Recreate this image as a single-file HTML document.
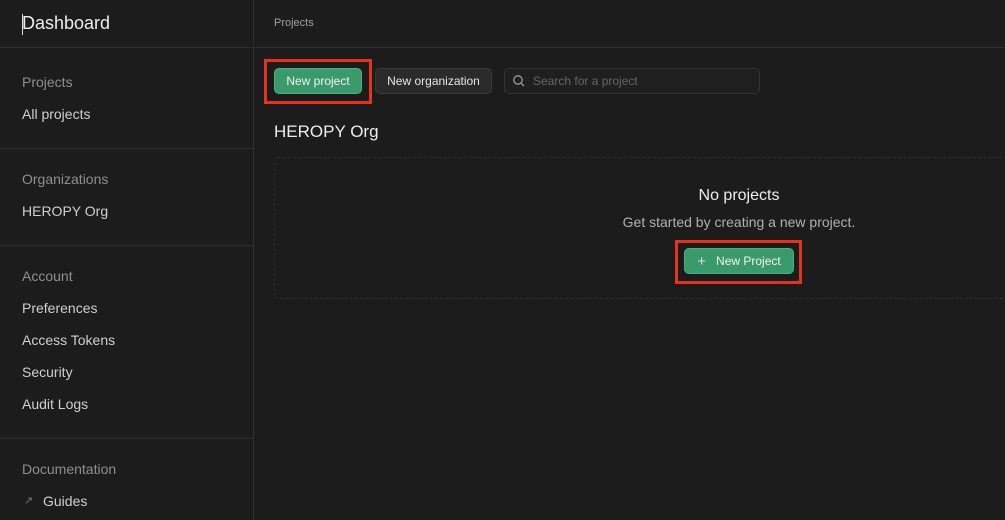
<!DOCTYPE html>
<html><head><style>
*{margin:0;padding:0;box-sizing:border-box}
body{width:1005px;height:520px;background:#1c1c1c;font-family:"Liberation Sans",sans-serif;position:relative;overflow:hidden;color:#ededed}
.a{position:absolute;white-space:nowrap}
.hl{position:absolute;height:1px;background:#2e2e2e}
.sec{color:#8f8f8f;font-size:14px}
.it{color:#cfcfcf;font-size:14px}
.btn{position:absolute;border-radius:5px;font-size:12px;display:flex;align-items:center;justify-content:center}
.red{position:absolute;border:3px solid #e8321e}
</style></head><body>
<div class="a" style="left:253px;top:0;width:1px;height:520px;background:#2e2e2e"></div>
<div class="hl" style="left:0;top:47px;width:1005px"></div>
<div class="a" style="left:22px;top:13px;font-size:18px;color:#ededed">Dashboard</div>
<div class="a" style="left:22px;top:14px;width:1px;height:21px;background:#ddd"></div>
<div class="a" style="left:274px;top:17px;font-size:11px;color:#a0a0a0">Projects</div>

<div class="a sec" style="left:22px;top:74px">Projects</div>
<div class="a it" style="left:22px;top:106px">All projects</div>
<div class="hl" style="left:0;top:148px;width:253px"></div>
<div class="a sec" style="left:22px;top:171px">Organizations</div>
<div class="a it" style="left:22px;top:203px">HEROPY Org</div>
<div class="hl" style="left:0;top:245px;width:253px"></div>
<div class="a sec" style="left:22px;top:268px">Account</div>
<div class="a it" style="left:22px;top:300px">Preferences</div>
<div class="a it" style="left:22px;top:332px">Access Tokens</div>
<div class="a it" style="left:22px;top:364px">Security</div>
<div class="a it" style="left:22px;top:396px">Audit Logs</div>
<div class="hl" style="left:0;top:438px;width:253px"></div>
<div class="a sec" style="left:22px;top:461px">Documentation</div>
<div class="a" style="left:24px;top:494px;font-size:11px;color:#777">↗</div>
<div class="a it" style="left:43px;top:493px">Guides</div>

<div class="red" style="left:264px;top:59px;width:108px;height:45px"></div>
<div class="btn" style="left:274px;top:68px;width:88px;height:26px;background:#3a9a6b;border:1px solid #4bb07e;color:#f2f2f2">New project</div>
<div class="btn" style="left:375px;top:68px;width:117px;height:26px;background:#2a2a2a;border:1px solid #3a3a3a;color:#e6e6e6">New organization</div>
<div class="a" style="left:504px;top:68px;width:256px;height:26px;border:1px solid #333;border-radius:5px;background:#1f1f1f"></div>
<svg class="a" style="left:512px;top:74px" width="14" height="14" viewBox="0 0 14 14"><circle cx="6" cy="6" r="4.2" fill="none" stroke="#999" stroke-width="1.3"/><path d="M9.2 9.2L12 12" stroke="#999" stroke-width="1.3"/></svg>
<div class="a" style="left:533px;top:74px;font-size:12px;color:#666">Search for a project</div>

<div class="a" style="left:274px;top:122px;font-size:17px;color:#ededed">HEROPY Org</div>
<div class="a" style="left:274px;top:157px;width:760px;height:142px;border:1px dashed #2c2c2c;border-radius:4px"></div>
<div class="a" style="left:639px;width:200px;text-align:center;top:187px;font-size:16px;color:#ededed">No projects</div>
<div class="a" style="left:589px;width:300px;text-align:center;top:214px;font-size:14px;color:#b0b0b0">Get started by creating a new project.</div>
<div class="red" style="left:675px;top:240px;width:127px;height:44px"></div>
<div class="btn" style="left:684px;top:248px;width:110px;height:26px;background:#3a9a6b;border:1px solid #4bb07e;color:#f2f2f2"><span style="font-size:15px;color:#cde;margin-right:10px;font-weight:300">+</span>New Project</div>
</body></html>
